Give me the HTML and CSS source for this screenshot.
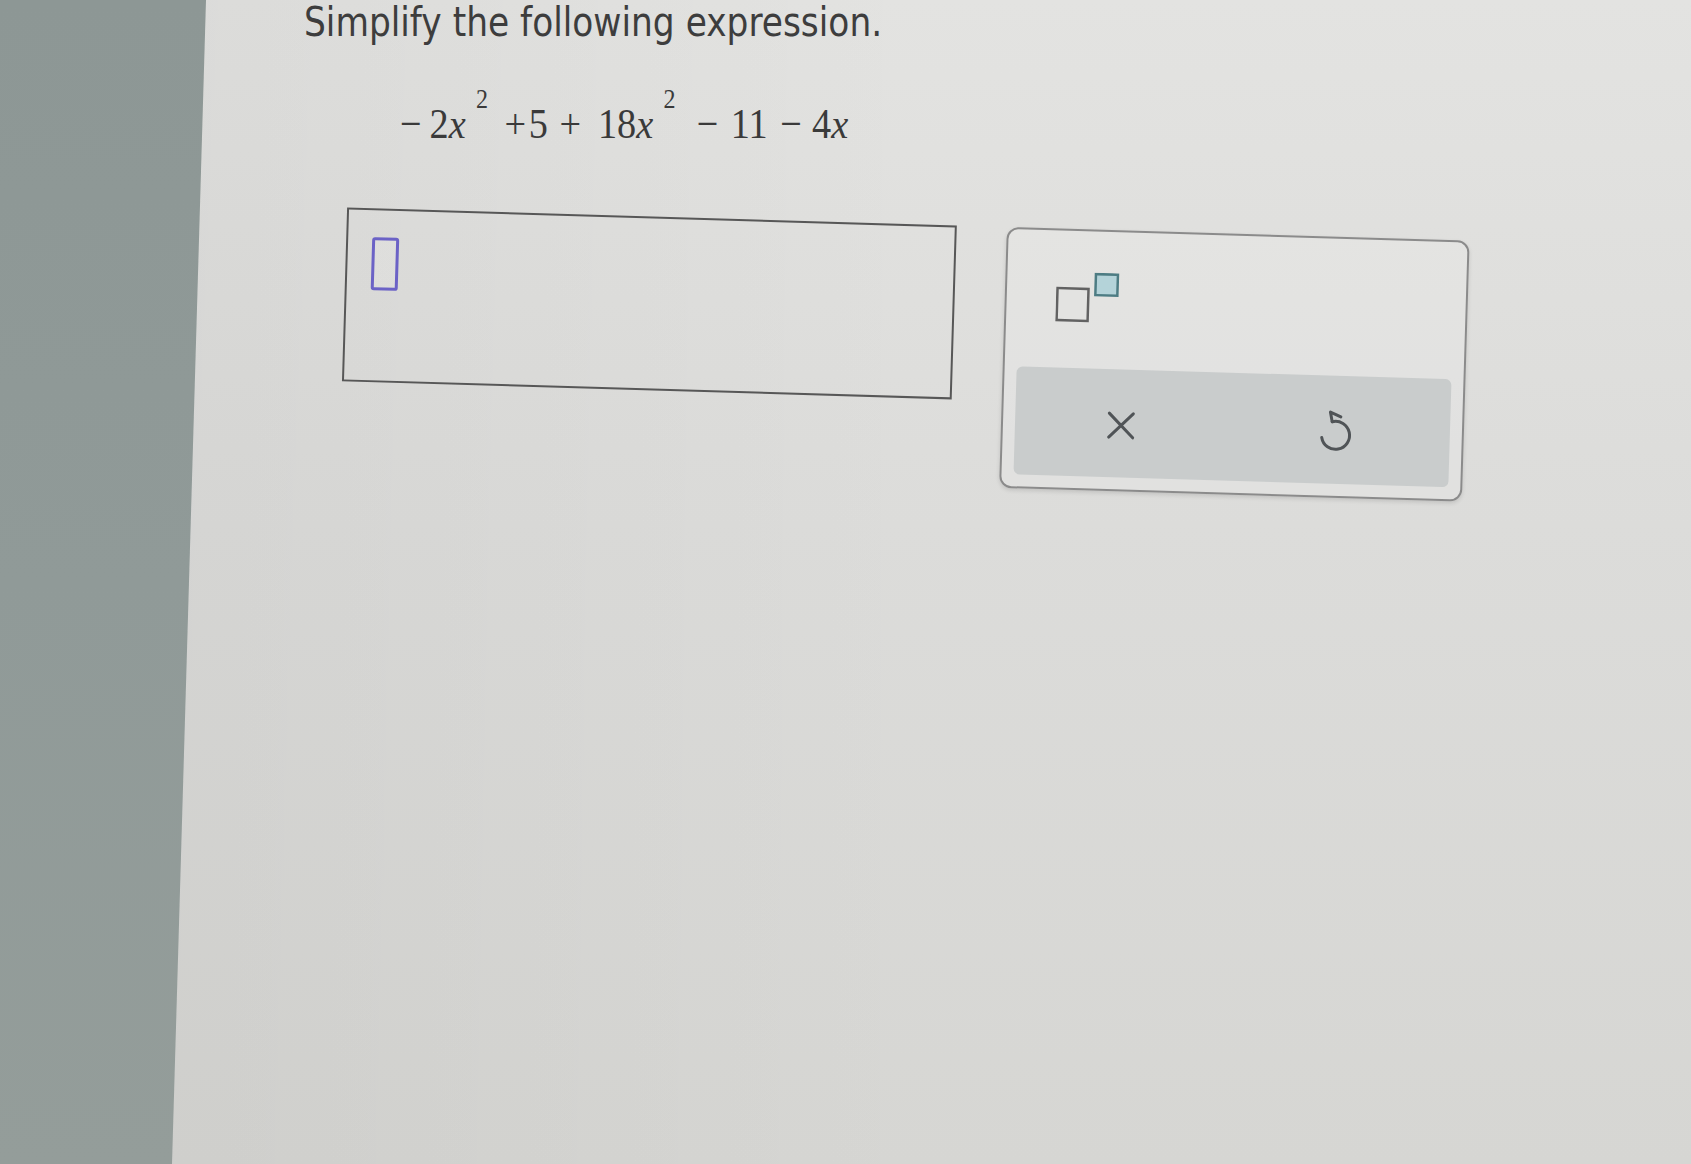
FILE: index.html
```html
<!DOCTYPE html>
<html lang="en">
<head>
<meta charset="utf-8">
<title>Simplify the following expression</title>
<link rel="stylesheet" href="styles.css">
</head>
<body>
<div class="screen">
  <aside class="sidebar"></aside>
  <main class="question">
    <h1 class="prompt">Simplify the following expression.</h1>
    <div class="expr"><span class="neg">−</span>2<i>x</i><sup>2</sup><span class="op op-a">+</span>5<span class="op op-b">+</span>18<i>x</i><sup>2</sup><span class="op op-c">−</span>11<span class="op op-d">−</span>4<i>x</i></div>
    <div class="answer-row">
      <div class="answer-box"><span class="cursor"></span></div>
      <div class="keypad">
        <div class="keypad-keys">
          <button class="key-sup" type="button" aria-label="Exponent">
            <svg width="64" height="51" viewBox="0 0 64 51">
              <rect x="1.5" y="16.5" width="31" height="32" fill="#e3e3e1" stroke="#626262" stroke-width="2.5"/>
              <rect x="39.5" y="1.5" width="22" height="21" fill="#b4d3d9" stroke="#4d7c83" stroke-width="2.5"/>
            </svg>
          </button>
        </div>
        <div class="keypad-actions">
          <button class="action action-clear" type="button" aria-label="Clear">
            <svg width="32" height="32" viewBox="0 0 32 32">
              <path d="M4 4 L28 28 M28 4 L4 28" stroke="#505457" stroke-width="3" stroke-linecap="round" fill="none"/>
            </svg>
          </button>
          <button class="action action-undo" type="button" aria-label="Undo">
            <svg width="38" height="44" viewBox="0 0 38 44">
              <path d="M15 14 A14 14 0 1 1 5 30" stroke="#505457" stroke-width="3" stroke-linecap="round" fill="none"/>
              <path d="M23.5 9 L13 4.5 L15 14" stroke="#505457" stroke-width="3" stroke-linecap="round" stroke-linejoin="round" fill="none"/>
            </svg>
          </button>
        </div>
      </div>
    </div>
  </main>
</div>
</body>
</html>
```
FILE: styles.css
```css
html, body {
  margin: 0;
  padding: 0;
}

body {
  width: 1691px;
  height: 1164px;
  overflow: hidden;
}

.screen {
  display: flex;
  height: 1164px;
  background:
    linear-gradient(to right, rgba(0, 0, 0, 0.045) 0, rgba(0, 0, 0, 0) 55%),
    linear-gradient(to bottom, #e3e3e1 0%, #dcdcda 45%, #d6d6d3 100%);
}

.sidebar {
  flex: none;
  width: 206px;
  height: 100%;
  background: linear-gradient(to bottom, #8d9795 0%, #909a98 50%, #949d9a 100%);
  clip-path: polygon(0 0, 100% 0, calc(100% - 34px) 100%, 0 100%);
}

.question {
  flex: 1;
  padding-left: 98px;
}

.prompt {
  width: max-content;
  margin: 0;
  font-family: "DejaVu Sans", sans-serif;
  font-weight: 400;
  font-size: 40px;
  line-height: 44px;
  color: #3d3d3d;
  white-space: nowrap;
  transform: scaleX(0.86);
  transform-origin: left center;
}

.expr {
  width: max-content;
  margin: 55px 0 0 96px;
  font-family: "Liberation Serif", serif;
  font-size: 43px;
  line-height: 50px;
  color: #3a3a3a;
  white-space: nowrap;
  transform: scaleX(0.89);
  transform-origin: left center;
}

.expr i {
  font-style: italic;
}

.expr sup {
  font-size: 27px;
  line-height: 0;
  vertical-align: 30px;
  margin-left: 11.5px;
}

.neg {
  margin-right: 9px;
}

.op {
  margin: 0 11.5px 0 18.5px;
}

.op-a {
  margin-right: 3px;
}

.op-b {
  margin-left: 13px;
  margin-right: 19px;
}

.op-c {
  margin-left: 24px;
  margin-right: 14px;
}

.op-d {
  margin-left: 14px;
}

.answer-row {
  display: flex;
  align-items: flex-start;
  gap: 50px;
  width: max-content;
  margin-top: 75px;
  margin-left: 39px;
  transform: rotate(1.7deg);
}

.answer-box {
  box-sizing: border-box;
  width: 610px;
  height: 174px;
  padding: 27px 0 0 24px;
  border: 2px solid #575757;
}

.cursor {
  display: block;
  box-sizing: border-box;
  width: 27px;
  height: 53px;
  border: 3px solid #6b62c6;
  border-radius: 3px;
  background: rgba(255, 255, 255, 0.12);
}

.keypad {
  box-sizing: border-box;
  width: 463px;
  height: 261px;
  padding: 12px;
  border: 2px solid #8b8b8b;
  border-radius: 12px;
  background: rgba(255, 255, 255, 0.14);
  box-shadow: 0 2px 4px rgba(0, 0, 0, 0.12);
  display: flex;
  flex-direction: column;
  justify-content: space-between;
}

.keypad-keys {
  display: flex;
  padding: 29px 0 0 37px;
}

.key-sup {
  display: block;
  padding: 0;
  margin: 0;
  border: 0;
  background: transparent;
  line-height: 0;
}

.keypad-actions {
  display: flex;
  height: 108px;
  border-radius: 6px;
  background: #c9cccc;
}

.action {
  flex: 1;
  display: flex;
  align-items: center;
  justify-content: center;
  padding: 0;
  margin: 0;
  border: 0;
  background: transparent;
}

.action svg {
  display: block;
}

.action-clear svg {
  margin: 4px 6px 0 0;
}

.action-undo svg {
  margin-right: 10px;
}
```
